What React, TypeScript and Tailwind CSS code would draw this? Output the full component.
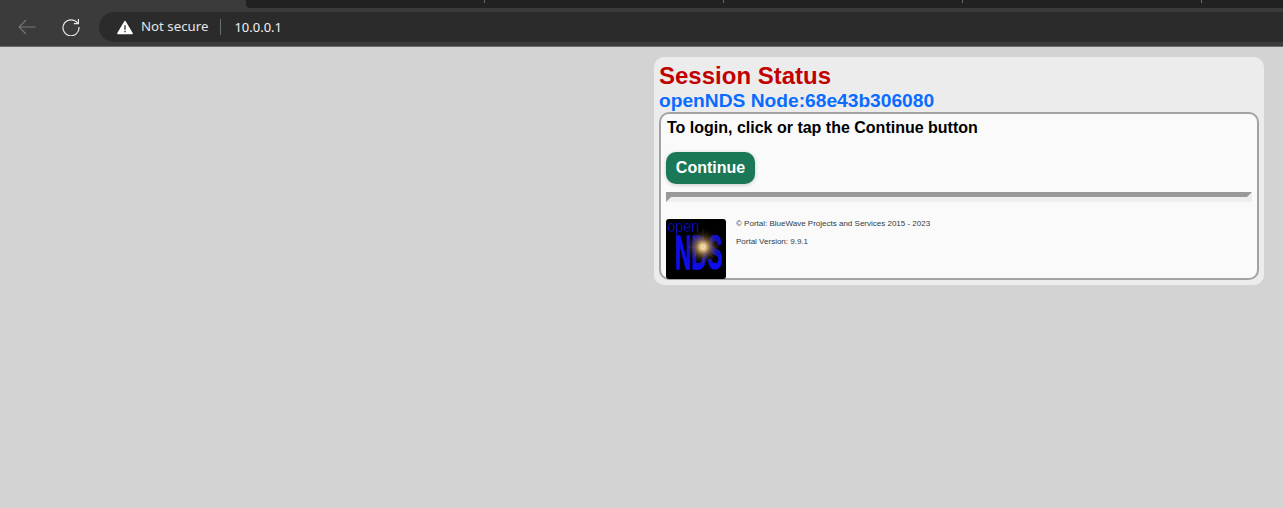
import React from "react";

function Logo() {
  return (
    <svg width="60" height="60" viewBox="0 0 60 60" className="block rounded-[3px] shrink-0">
      <defs>
        <radialGradient id="glow" cx="50%" cy="50%" r="50%">
          <stop offset="0%" stopColor="#fffbe8" />
          <stop offset="14%" stopColor="#f2d090" />
          <stop offset="38%" stopColor="#8a6a38" stopOpacity="0.8" />
          <stop offset="68%" stopColor="#403018" stopOpacity="0.35" />
          <stop offset="100%" stopColor="#000000" stopOpacity="0" />
        </radialGradient>
        <filter id="soft">
          <feGaussianBlur stdDeviation="0.35" />
        </filter>
      </defs>
      <rect width="60" height="60" fill="#000" />
      <g filter="url(#soft)">
        <text transform="translate(1 13) scale(0.85 1)" fontFamily="Liberation Sans" fontSize="17" fill="#0808b0">open</text>
        <text transform="translate(9 50) scale(0.47 1)" fontFamily="Liberation Sans" fontWeight="700" fontSize="48" fill="#0a0af0" stroke="#0a0af0" strokeWidth="1.4">NDS</text>
      </g>
      <circle cx="37" cy="28" r="20" fill="url(#glow)" />
      <g stroke="#a08048" strokeWidth="0.4" opacity="0.45">
        <path d="M37 10V46M22 28H52M27 18L47 38M47 18L27 38" />
      </g>
    </svg>
  );
}

export default function App() {
  return (
    <div className="w-[1283px] h-[508px] overflow-hidden bg-[#d3d3d3] flex flex-col font-['Liberation_Sans',Arial,sans-serif]">
      <div className="h-[47px] shrink-0 bg-[#3b3b3b] border-b border-[#6b6b6b] flex flex-col">
        <div className="h-[8px] flex shrink-0">
          <div className="w-[246px]" />
          <div className="flex-1 flex bg-[#212121] rounded-bl-[4px]">
            <div className="w-[239px] h-[3px] border-r border-[#6a6a6a]" />
            <div className="w-[239px] h-[3px] border-r border-[#6a6a6a]" />
            <div className="w-[239px] h-[3px] border-r border-[#6a6a6a]" />
            <div className="w-[239px] h-[3px] border-r border-[#6a6a6a]" />
          </div>
        </div>
        <div className="flex items-center h-[30px] mt-[4px] pl-[18px]">
          <svg width="18" height="16" viewBox="0 0 18 16" fill="none" stroke="#777777" strokeWidth="1.1">
            <path d="M17.5 8H1M8 1L1 8L8 15" />
          </svg>
          <svg className="ml-[26px]" width="18" height="18" viewBox="0 0 18 18" fill="none" stroke="#e8e8e8" strokeWidth="1.2">
            <path d="M15.6 5.2A8 8 0 1 0 17 9" />
            <path d="M16.4 1V5.6H11.8" />
          </svg>
          <div className="ml-[19px] flex-1 h-[30px] rounded-l-[15px] bg-[#2b2b2b] flex items-center pl-[18px] font-['Noto_Sans',sans-serif] text-[13.25px] text-[#e6e6e6]">
            <svg width="16" height="15" viewBox="0 0 17 15">
              <path fillRule="evenodd" fill="#ffffff" d="M8.5 0.4C8.9 0.4 9.2 0.6 9.4 1L16.7 13.4C17 14 16.7 14.8 15.9 14.8H1.1C0.3 14.8 0 14 0.3 13.4L7.6 1C7.8 0.6 8.1 0.4 8.5 0.4ZM7.8 5V10H9.2V5ZM7.8 11V12.6H9.2V11Z" />
            </svg>
            <span className="ml-[8px] leading-none">Not secure</span>
            <span className="ml-[12px] w-px h-[16px] bg-[#6e6e6e]" />
            <span className="ml-[13px] leading-none text-[13px] text-[#f2f2f2]">10.0.0.1</span>
          </div>
        </div>
      </div>

      <div className="flex justify-end pr-[19px] pt-[10px]">
        <div className="w-[610px] h-[228px] bg-[#ececec] rounded-[10px] px-[5px] pt-[5px]">
          <div className="text-[24px] font-bold leading-[28px] text-[#c20000]">Session Status</div>
          <div className="text-[19.2px] font-bold leading-[21px] text-[#0a6cff]">openNDS Node:68e43b306080</div>
          <div className="h-[168px] mt-[1px] bg-[#fafafa] border-2 border-[#a3a3a3] rounded-[10px] px-[5px] pt-[5px]">
            <div className="text-[16px] font-bold leading-[18px] text-black pl-[1px]">To login, click or tap the Continue button</div>
            <button className="block mt-[15px] w-[89px] h-[32px] rounded-[10px] bg-[#1a7856] text-white text-[16px] font-bold shadow-[0_1px_4px_rgba(0,0,0,0.2)]">Continue</button>
            <div className="mt-[8px] h-[10px] border-[5px] border-t-[#999999] border-l-[#999999] border-b-[#eeeeee] border-r-[#eeeeee]" />
            <div className="flex mt-[17px]">
              <Logo />
              <div className="ml-[10px] text-[8px] leading-[9px] text-[#333a45]">
                <div>© Portal: BlueWave Projects and Services 2015 - 2023</div>
                <div className="mt-[9px]">Portal Version: 9.9.1</div>
              </div>
            </div>
          </div>
        </div>
      </div>
    </div>
  );
}
